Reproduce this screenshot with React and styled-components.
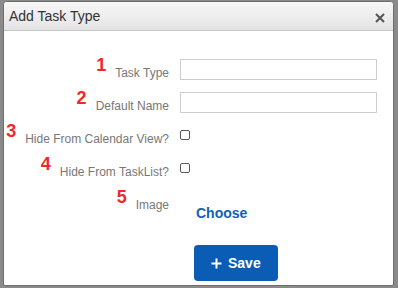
import * as React from "react";
import styled, { createGlobalStyle } from "styled-components";

const GlobalStyle = createGlobalStyle`
  html, body {
    margin: 0;
    padding: 0;
    background: #8a8a8a;
    font-family: "Liberation Sans", Arial, sans-serif;
  }
`;

const Backdrop = styled.div`
  padding: 1px 4px 2px 3px;
  height: 288px;
  box-sizing: border-box;
`;

const Dialog = styled.div`
  width: 391px;
  box-sizing: border-box;
  background: #fff;
  border: 1px solid #6e6e6e;
  border-radius: 4px 4px 2px 2px;
  overflow: hidden;
`;

const Header = styled.div`
  height: 28px;
  display: flex;
  align-items: center;
  justify-content: space-between;
  padding: 0 8px 0 5px;
  background: linear-gradient(#f7f7f7, #e4e4e4);
  border-bottom: 1px solid #c4c4c4;
`;

const Title = styled.div`
  font-size: 14px;
  line-height: 28px;
  color: #333;
`;

const Close = styled.button`
  border: 0;
  background: none;
  padding: 0;
  margin-top: 3px;
  display: flex;
  cursor: pointer;
`;

const Body = styled.div`
  padding: 28px 16px 4px 0;
`;

const Row = styled.div`
  display: grid;
  grid-template-columns: 165px 1fr;
  column-gap: 11px;
  align-items: ${(p) => (p.$top ? "start" : "end")};
  margin-top: ${(p) => p.$gap || 0}px;
`;

const Label = styled.label`
  text-align: right;
  font-size: 12px;
  line-height: ${(p) => (p.$top ? 15 : 14)}px;
  color: #777;
  white-space: nowrap;
`;

const Num = styled.span`
  color: #ee2a2a;
  font-weight: bold;
  font-size: 18px;
  line-height: 0;
  vertical-align: 6px;
  margin-right: 9px;
`;

const TextInput = styled.input`
  box-sizing: border-box;
  width: 197px;
  height: 21px;
  margin: 0;
  border: 1px solid #cdcdcd;
  border-radius: 0;
  padding: 0 4px;
  font: 12px "Liberation Sans", Arial, sans-serif;
`;

const Check = styled.input`
  appearance: none;
  width: 10px;
  height: 10px;
  margin: 0 0 6px;
  border: 1px solid #5a5a5a;
  border-radius: 2px;
  background: #fff;
`;

const ChooseLink = styled.a`
  display: block;
  margin: 8px 0 0 16px;
  font-size: 14px;
  line-height: 16px;
  font-weight: bold;
  color: #1260b8;
  text-decoration: none;
  cursor: pointer;
`;

const SaveButton = styled.button`
  margin-left: 14px;
  height: 36px;
  padding: 0 17px;
  display: inline-flex;
  align-items: center;
  gap: 6px;
  border: 0;
  border-radius: 4px;
  background: #0b5cb5;
  color: #fff;
  font: bold 14px "Liberation Sans", Arial, sans-serif;
  cursor: pointer;
`;

const fields = [
  { n: 1, label: "Task Type", type: "text" },
  { n: 2, label: "Default Name", type: "text", gap: 12 },
  { n: 3, label: "Hide From Calendar View?", type: "check", gap: 17 },
  { n: 4, label: "Hide From TaskList?", type: "check", gap: 17 },
];

export default function App() {
  return (
    <>
      <GlobalStyle />
      <Backdrop>
        <Dialog>
          <Header>
            <Title>Add Task Type</Title>
            <Close aria-label="close">
              <svg width="10" height="10" viewBox="0 0 10 10">
                <path d="M1 1L9 9M9 1L1 9" stroke="#555" strokeWidth="2" />
              </svg>
            </Close>
          </Header>
          <Body>
            {fields.map((f) => (
              <Row key={f.n} $gap={f.gap}>
                <Label>
                  <Num>{f.n}</Num>
                  {f.label}
                </Label>
                <div style={{ display: "flex" }}>
                  {f.type === "text" ? <TextInput /> : <Check type="checkbox" />}
                </div>
              </Row>
            ))}
            <Row $gap={18} $top>
              <Label $top>
                <Num>5</Num>
                Image
              </Label>
              <ChooseLink>Choose</ChooseLink>
            </Row>
            <Row $gap={24}>
              <span />
              <div>
                <SaveButton>
                  <svg width="11" height="11" viewBox="0 0 11 11">
                    <path d="M5.5 0.5V10.5M0.5 5.5H10.5" stroke="#fff" strokeWidth="2" />
                  </svg>
                  Save
                </SaveButton>
              </div>
            </Row>
          </Body>
        </Dialog>
      </Backdrop>
    </>
  );
}
